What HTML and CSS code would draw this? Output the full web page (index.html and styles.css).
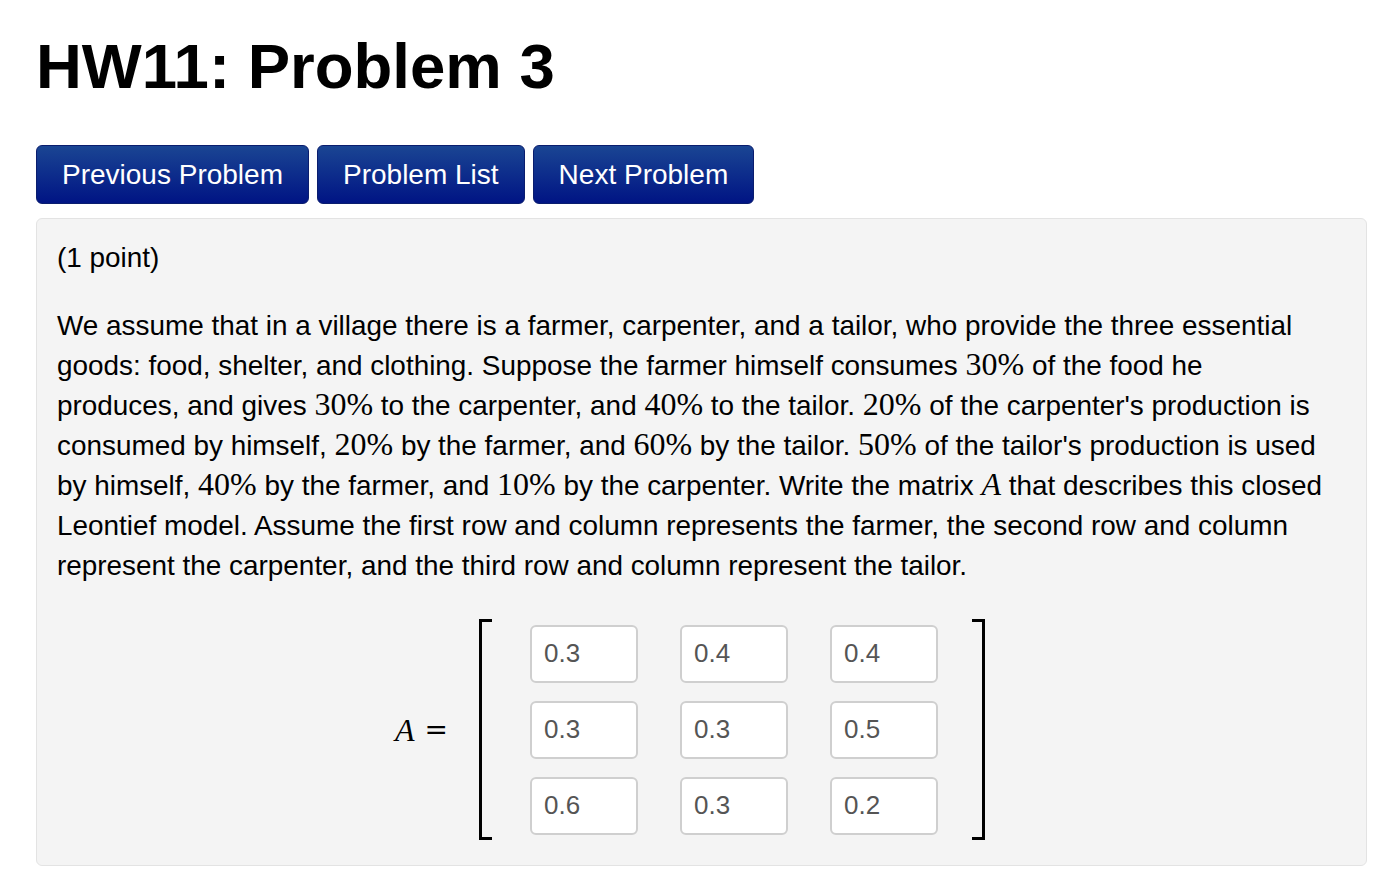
FILE: index.html
```html
<!DOCTYPE html>
<html lang="en">
  <head>
    <meta charset="UTF-8" />
    <title>HW11: Problem 3</title>
    <link rel="stylesheet" href="styles.css">
  </head>
  <body>
    <div class="page">
      <h1>HW11: Problem 3</h1>

      <div class="nav">
        <button class="btn">Previous Problem</button>
        <button class="btn">Problem List</button>
        <button class="btn">Next Problem</button>
      </div>

      <div class="problem">
        <p class="points">(1 point)</p>
        <p class="text">
          We assume that in a village there is a farmer, carpenter, and a tailor, who provide the three essential<br>
          goods: food, shelter, and clothing. Suppose the farmer himself consumes <span class="m">30%</span> of the food he<br>
          produces, and gives <span class="m">30%</span> to the carpenter, and <span class="m">40%</span> to the tailor.
          <span class="m">20%</span> of the carpenter's production is<br>
          consumed by himself, <span class="m">20%</span> by the farmer, and <span class="m">60%</span> by the tailor.
          <span class="m">50%</span> of the tailor's production is used<br>
          by himself, <span class="m">40%</span> by the farmer, and <span class="m">10%</span> by the carpenter. Write the
          matrix <span class="m"><i>A</i></span> that describes this closed<br>
          Leontief model. Assume the first row and column represents the farmer, the second row and column<br>
          represent the carpenter, and the third row and column represent the tailor.
        </p>

        <div class="matrix">
          <span class="label"><i>A</i><span class="eq">=</span></span>
          <div class="bracket left"></div>
          <div class="cells">
            <input type="text" value="0.3" />
            <input type="text" value="0.4" />
            <input type="text" value="0.4" />
            <input type="text" value="0.3" />
            <input type="text" value="0.3" />
            <input type="text" value="0.5" />
            <input type="text" value="0.6" />
            <input type="text" value="0.3" />
            <input type="text" value="0.2" />
          </div>
          <div class="bracket right"></div>
        </div>
      </div>
    </div>
  </body>
</html>
```

FILE: styles.css
```css
body {
  margin: 0;
  background-color: #fff;
  color: #000;
  font-family: "Liberation Sans", Arial, sans-serif;
}

.page {
  padding: 28px 7px 0 36px;
}

h1 {
  margin: 0 0 40px 0;
  font-size: 63.5px;
  line-height: 77px;
  font-weight: bold;
}

.nav {
  display: flex;
  gap: 8px;
  margin-bottom: 14px;
}

.btn {
  height: 59px;
  padding: 0 25px;
  border: 1px solid #0a1d6e;
  border-radius: 6px;
  background-image: linear-gradient(to bottom, #1a4593, #001484);
  color: #fff;
  font-family: "Liberation Sans", Arial, sans-serif;
  font-size: 28px;
  cursor: pointer;
}

.problem {
  background-color: #f4f4f4;
  border: 1px solid #e3e3e3;
  border-radius: 6px;
  padding: 19px 19px 25px 20px;
  font-size: 27.9px;
  line-height: 40px;
}

.problem p {
  margin: 0;
}

.points {
  margin-bottom: 28px !important;
}

.m {
  font-family: "Liberation Serif", "Times New Roman", serif;
  font-size: 32px;
  line-height: 1;
}

.matrix {
  display: flex;
  align-items: center;
  justify-content: center;
  margin-top: 33px;
  padding-right: 24px;
}

.label {
  display: flex;
  align-items: center;
  width: 55px;
  margin-right: 29px;
  font-family: "Liberation Serif", "Times New Roman", serif;
  font-size: 32px;
}

.label .eq {
  margin-left: 10px;
  font-family: "DejaVu Serif", serif;
  font-size: 28px;
}

.bracket {
  width: 10px;
  height: 215px;
  border: 3px solid #000;
}

.bracket.left {
  border-right: none;
  margin-right: 38px;
}

.bracket.right {
  border-left: none;
  margin-left: 34px;
}

.cells {
  display: grid;
  grid-template-columns: repeat(3, 108px);
  column-gap: 42px;
  row-gap: 18px;
}

.cells input {
  box-sizing: border-box;
  width: 108px;
  height: 58px;
  margin: 0;
  padding: 0 12px;
  border: 2px solid #cfcfcf;
  border-radius: 6px;
  background-color: #fff;
  color: #555;
  font-family: "Liberation Sans", Arial, sans-serif;
  font-size: 26px;
}
```
